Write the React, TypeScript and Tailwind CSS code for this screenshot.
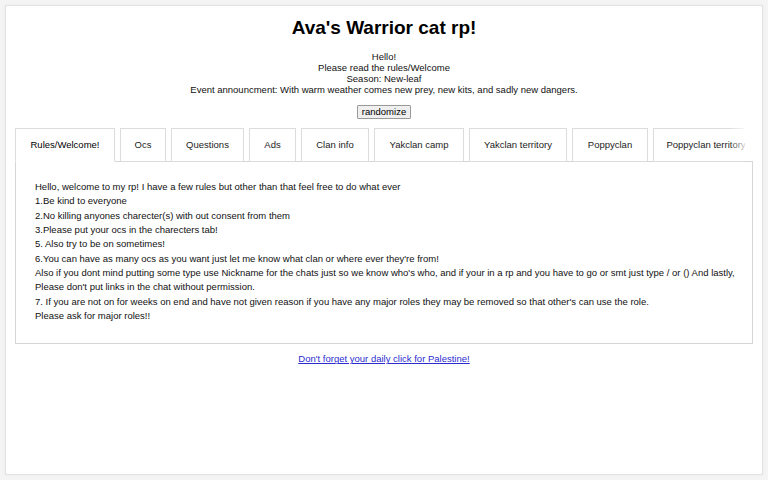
import React, { useState } from 'react';

const tabs = [
  { label: 'Rules/Welcome!', w: 'w-[100px]' },
  { label: 'Ocs', w: 'w-[46px]' },
  { label: 'Questions', w: 'w-[73px]' },
  { label: 'Ads', w: 'w-[47px]' },
  { label: 'Clan info', w: 'w-[68px]' },
  { label: 'Yakclan camp', w: 'w-[90px]' },
  { label: 'Yakclan territory', w: 'w-[98px]' },
  { label: 'Poppyclan', w: 'w-[76px]' },
  { label: 'Poppyclan territory', w: 'w-[106px]' },
];

const rules = [
  'Hello, welcome to my rp! I have a few rules but other than that feel free to do what ever',
  '1.Be kind to everyone',
  '2.No killing anyones charecter(s) with out consent from them',
  '3.Please put your ocs in the charecters tab!',
  '5. Also try to be on sometimes!',
  "6.You can have as many ocs as you want just let me know what clan or where ever they're from!",
  "Also if you dont mind putting some type use Nickname for the chats just so we know who's who, and if your in a rp and you have to go or smt just type / or () And lastly,",
  "Please don't put links in the chat without permission.",
  "7. If you are not on for weeks on end and have not given reason if you have any major roles they may be removed so that other's can use the role.",
  'Please ask for major roles!!',
];

export default function App() {
  const [active, setActive] = useState(0);

  return (
    <div className="w-[768px] h-[480px] bg-[#f4f4f4] p-[5px] font-['Liberation_Sans',Arial,sans-serif] text-[#111]">
      <div className="h-full bg-white border border-[#e2e2e2] shadow-[0_0_2px_rgba(0,0,0,0.06)] px-[9px]">
        {/* Header */}
        <h1 className="mt-[11px] text-center text-[19px] leading-[22px] font-bold text-black">
          Ava's Warrior cat rp!
        </h1>
        <div className="mt-[12px] text-center text-[9.5px] leading-[11px]">
          <div>Hello!</div>
          <div>Please read the rules/Welcome</div>
          <div>Season: New-leaf</div>
          <div>Event announcment: With warm weather comes new prey, new kits, and sadly new dangers.</div>
        </div>
        <div className="mt-[10px] flex justify-center">
          <button className="h-[14px] px-[4px] bg-[#efefef] border border-[#9a9a9a] rounded-[1px] text-[9.5px] leading-[12px] text-black">
            randomize
          </button>
        </div>

        {/* Tabs */}
        <div className="relative mt-[9px] w-[730px] overflow-hidden">
          <div className="flex gap-[5px] w-max">
            {tabs.map((t, i) => (
              <button
                key={t.label}
                onClick={() => setActive(i)}
                className={`${t.w} h-[34px] text-[9.5px] whitespace-nowrap border border-[#dcdcdc] ${
                  active === i
                    ? 'bg-white border-b-white relative z-10 text-black'
                    : 'bg-white h-[33px] text-[#222]'
                }`}
              >
                {t.label}
              </button>
            ))}
          </div>
          <div className="absolute right-0 top-0 h-[33px] w-[16px] bg-gradient-to-r from-transparent to-white/80" />
        </div>

        {/* Content */}
        <div className="-mt-px border border-[#d6d6d6] pl-[19px] pr-[8px] pt-[18px] pb-[20px] text-[9.5px] leading-[14.35px] text-[#111]">
          {rules.map((line, i) => (
            <div key={i} className="whitespace-nowrap">{line}</div>
          ))}
        </div>

        <div className="mt-[9px] text-center text-[9.5px] leading-[12px]">
          <a href="#" className="text-[#2b2bd0] underline">
            Don't forget your daily click for Palestine!
          </a>
        </div>
      </div>
    </div>
  );
}
